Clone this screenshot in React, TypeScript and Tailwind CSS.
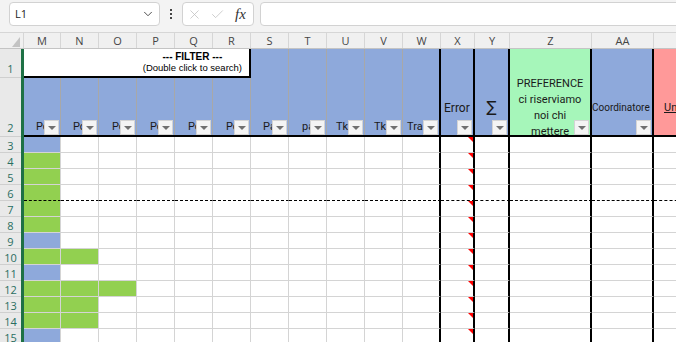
import React from "react";
import { ChevronDown, X, Check } from "lucide-react";

type Col = { id: string; w: string; thick?: boolean };

const cols: Col[] = [
  { id: "M", w: "w-[37px]" },
  { id: "N", w: "w-[38px]" },
  { id: "O", w: "w-[38px]" },
  { id: "P", w: "w-[38px]" },
  { id: "Q", w: "w-[38px]" },
  { id: "R", w: "w-[38px]" },
  { id: "S", w: "w-[38px]" },
  { id: "T", w: "w-[38px]" },
  { id: "U", w: "w-[38px]" },
  { id: "V", w: "w-[38px]" },
  { id: "W", w: "w-[38px]", thick: true },
  { id: "X", w: "w-[34px]", thick: true },
  { id: "Y", w: "w-[35px]", thick: true },
  { id: "Z", w: "w-[82px]", thick: true },
  { id: "AA", w: "w-[62px]", thick: true },
  { id: "AB", w: "w-[60px]" },
];

// row-2 labels under the filter, clipped by the dropdown button
const filterLabels = [
  { w: "w-[37px]", text: "Po", pl: "pl-[12px]" },
  { w: "w-[38px]", text: "Po", pl: "pl-[12px]" },
  { w: "w-[38px]", text: "Po", pl: "pl-[13px]" },
  { w: "w-[38px]", text: "Po", pl: "pl-[13px]" },
  { w: "w-[38px]", text: "Po", pl: "pl-[13px]" },
  { w: "w-[38px]", text: "Po", pl: "pl-[13px]" },
];

const midLabels = [
  { text: "Pa", pl: "pl-[12px]" },
  { text: "pa", pl: "pl-[13px]" },
  { text: "Tka", pl: "pl-[9px]" },
  { text: "Tka", pl: "pl-[9px]" },
  { text: "Tra", pl: "pl-[4px]" },
];

const rows = [3, 4, 5, 6, 7, 8, 9, 10, 11, 12, 13, 14, 15];

const GREEN = "bg-[#92d050]";
const BLUE = "bg-[#8ea9db]";

const fillFor = (row: number, col: string) => {
  if (col === "M") {
    if ([3, 9, 11, 15].includes(row)) return BLUE;
    return GREEN;
  }
  if (col === "N" && [10, 12, 13, 14].includes(row)) return GREEN;
  if (col === "O" && row === 12) return GREEN;
  return "bg-white";
};

const FilterBtn = () => (
  <span className="absolute bottom-0 right-[1px] z-10 flex h-[15px] w-[15px] items-center justify-center border border-[#d4d4d4] bg-[#f4f4f4]">
    <span className="h-0 w-0 border-x-[4px] border-t-[4px] border-x-transparent border-t-[#707070]" />
  </span>
);

const cellFont = "font-['Roboto',sans-serif] text-[#1a1a1a]";
const uiFont = "font-['Open_Sans',sans-serif]";

export default function App() {
  return (
    <div className="h-[342px] w-[676px] overflow-hidden bg-white">
      {/* formula bar */}
      <div className={`flex h-[33px] items-start border-b border-[#d6d6d6] bg-[#f3f3f3] pl-[9px] pt-[2px] ${uiFont}`}>
        <div className="flex h-[24px] w-[151px] shrink-0 items-center justify-between rounded-[4px] border border-[#d2d2d2] bg-white pl-[5px] pr-[4px]">
          <span className="text-[11px] text-[#222]">L1</span>
          <ChevronDown size={14} strokeWidth={1.6} className="text-[#444]" />
        </div>
        <div className="flex h-[24px] w-[22px] shrink-0 flex-col items-center justify-center gap-[2px]">
          <span className="h-[2px] w-[2px] bg-[#444]" />
          <span className="h-[2px] w-[2px] bg-[#444]" />
          <span className="h-[2px] w-[2px] bg-[#444]" />
        </div>
        <div className="flex h-[24px] w-[72px] shrink-0 items-center rounded-[4px] border border-[#d2d2d2] bg-white pl-[4px]">
          <X size={15} strokeWidth={1.2} className="text-[#bdbdbd]" />
          <Check size={15} strokeWidth={1.2} className="ml-[8px] text-[#bdbdbd]" />
          <span className="ml-[10px] font-['Liberation_Serif',serif] text-[15px] italic leading-none text-[#333]">fx</span>
        </div>
        <div className="ml-[6px] h-[24px] w-[440px] shrink-0 rounded-l-[4px] border border-[#d2d2d2] bg-white" />
      </div>

      {/* column letters */}
      <div className={`flex h-[16px] border-b border-[#c4c4c4] bg-[#f0f0f0] ${uiFont}`}>
        <div className="relative w-[24px] shrink-0 border-r border-[#d6d6d6]">
          <svg className="absolute left-[12px] top-[4px]" width="8" height="10" viewBox="0 0 8 10">
            <polygon points="8,0 8,10 0,10" fill="#c3c3c3" />
          </svg>
        </div>
        {cols.map((c) => (
          <div
            key={c.id}
            className={`${c.w} flex shrink-0 items-center justify-center border-r border-[#d6d6d6] text-[11px] leading-none text-[#454545]`}
          >
            {c.id === "AB" ? "" : c.id}
          </div>
        ))}
      </div>

      <div className="flex">
        {/* row numbers */}
        <div className={`w-[21px] shrink-0 bg-[#e9e9e9] text-[11px] text-[#2a6e61] ${uiFont}`}>
          <div className="flex h-[29px] items-end justify-center border-b border-[#cfcfcf] pb-[2px] leading-[13px]">1</div>
          <div className="flex h-[59px] items-end justify-center border-b border-[#cfcfcf] pb-[2px] leading-[13px]">2</div>
          {rows.map((r) => (
            <div key={r} className="h-[16px] border-b border-[#cfcfcf] pt-[3px] text-center leading-[12px]">
              {r}
            </div>
          ))}
        </div>
        <div className="w-[3px] shrink-0 bg-[#1e7145]" />

        <div className="min-w-0 flex-1">
          {/* header rows 1-2 */}
          <div className={`flex h-[88px] border-b-2 border-black ${cellFont}`}>
            <div className="flex w-[227px] shrink-0 flex-col">
              <div className="flex h-[29px] shrink-0 flex-col items-end border-b-2 border-r-2 border-black bg-white pr-[7px] pt-[2px] font-['Liberation_Sans',Arial,sans-serif] text-black">
                <div className="flex flex-col items-center leading-[11px]">
                  <span className="text-[10px] font-bold">--- FILTER ---</span>
                  <span className="text-[9.5px]">(Double click to search)</span>
                </div>
              </div>
              <div className="flex flex-1">
                {filterLabels.map((l, i) => (
                  <div key={i} className={`relative flex ${l.w} shrink-0 items-end overflow-hidden border-r border-[#a8a8a8] ${BLUE}`}>
                    <span className={`${l.pl} whitespace-nowrap pb-[1px] text-[11px] leading-[14px]`}>{l.text}</span>
                    <FilterBtn />
                  </div>
                ))}
              </div>
            </div>

            {midLabels.map((l, i) => (
              <div
                key={i}
                className={`relative flex w-[38px] shrink-0 items-end overflow-hidden ${i === 4 ? "border-r-2 border-black" : "border-r border-[#a8a8a8]"} ${BLUE}`}
              >
                <span className={`${l.pl} whitespace-nowrap pb-[1px] text-[11px] leading-[14px]`}>{l.text}</span>
                <FilterBtn />
              </div>
            ))}

            <div className={`relative flex w-[34px] shrink-0 flex-col overflow-hidden border-r-2 border-black ${BLUE}`}>
              <div className="h-[29px] shrink-0" />
              <div className="flex flex-1 items-center pl-[3px] pt-[2px] text-[12px] leading-[16px]">Error</div>
              <FilterBtn />
            </div>
            <div className={`relative flex w-[35px] shrink-0 flex-col overflow-hidden border-r-2 border-black ${BLUE}`}>
              <div className="h-[29px] shrink-0" />
              <div className="flex flex-1 items-center justify-center font-['DejaVu_Sans',sans-serif] text-[15px] leading-[16px]">∑</div>
              <FilterBtn />
            </div>
            <div className="relative w-[82px] shrink-0 overflow-hidden border-r-2 border-black bg-[#a6f6ba] pt-[27px] text-center text-[11px] leading-[16px]">
              <div>PREFERENCE</div>
              <div>ci riserviamo</div>
              <div>noi chi</div>
              <div>mettere</div>
              <FilterBtn />
            </div>
            <div className={`relative flex w-[62px] shrink-0 flex-col overflow-hidden border-r-2 border-black ${BLUE}`}>
              <div className="h-[29px] shrink-0" />
              <div className="flex flex-1 items-center whitespace-nowrap pt-[2px] text-[10px] leading-[16px]">Coordinatore</div>
              <FilterBtn />
            </div>
            <div className="flex w-[60px] shrink-0 flex-col bg-[#ff9999]">
              <div className="h-[29px] shrink-0" />
              <div className="flex flex-1 items-center pl-[10px] pt-[2px] text-[11px] leading-[16px]">
                <span className="underline">Un</span>
              </div>
            </div>
          </div>

          {/* data rows */}
          {rows.map((r) => (
            <div key={r} className="flex h-[16px]">
              {cols.map((c) => (
                <div
                  key={c.id}
                  className={`relative ${c.w} shrink-0 border-b ${
                    c.thick ? "border-r-2 border-r-black" : "border-r border-r-[#d4d4d4]"
                  } ${r === 6 ? "border-b-black [border-bottom-style:dashed]" : "border-b-[#d4d4d4]"} ${fillFor(r, c.id)}`}
                >
                  {c.id === "X" && (
                    <svg className="absolute right-0 top-0" width="5" height="5" viewBox="0 0 5 5">
                      <polygon points="0,0 5,0 5,5" fill="#ff0000" />
                    </svg>
                  )}
                </div>
              ))}
            </div>
          ))}
        </div>
      </div>
    </div>
  );
}
